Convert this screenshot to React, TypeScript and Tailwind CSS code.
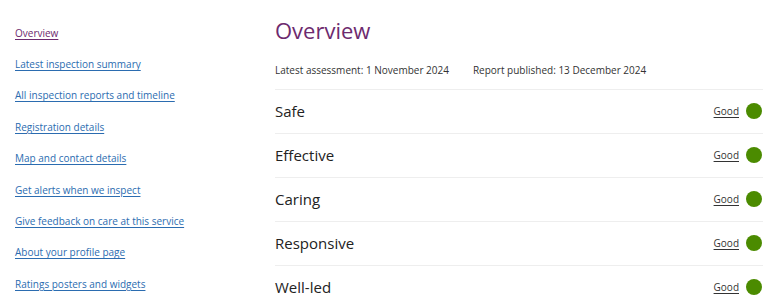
import React from "react";

const navItems = [
  "Overview",
  "Latest inspection summary",
  "All inspection reports and timeline",
  "Registration details",
  "Map and contact details",
  "Get alerts when we inspect",
  "Give feedback on care at this service",
  "About your profile page",
  "Ratings posters and widgets",
];

const rows = ["Safe", "Effective", "Caring", "Responsive", "Well-led"];

export default function App() {
  return (
    <div
      className="flex w-[768px] h-[299px] overflow-hidden bg-white text-[#222]"
      style={{ fontFamily: '"Open Sans", "Noto Sans", Arial, sans-serif' }}
    >
      <nav className="w-[275px] shrink-0 pl-[15px] pt-[17px]">
        <ul className="flex flex-col">
          {navItems.map((t, i) => (
            <li key={t} className="h-[31.375px] flex items-center">
              <a
                href="#"
                className={`text-[10px] leading-[16px] underline underline-offset-2 ${
                  i === 0 ? "text-[#6d2a6e]" : "text-[#2b6cb0]"
                }`}
              >
                {t}
              </a>
            </li>
          ))}
        </ul>
      </nav>
      <main className="flex-1 pr-[5px] pt-[15px]">
        <h1 className="text-[22px] leading-[30px] text-[#6d2a6e] font-normal">Overview</h1>
        <div className="mt-[17px] mb-[11px] flex gap-[24px] text-[10px] leading-[16px] text-[#333]">
          <span>Latest assessment: 1 November 2024</span>
          <span>Report published: 13 December 2024</span>
        </div>
        {rows.map((r) => (
          <div
            key={r}
            className="h-[44px] border-t border-[#eeeeee] flex items-center justify-between pb-[2px]"
          >
            <span className="text-[15px] leading-[24px] text-[#222]">{r}</span>
            <span className="flex items-center gap-[7px]">
              <a href="#" className="text-[10px] leading-[16px] text-[#333] underline underline-offset-2">
                Good
              </a>
              <span className="w-[16px] h-[16px] rounded-full bg-[#4b8b00] mr-px" />
            </span>
          </div>
        ))}
      </main>
    </div>
  );
}
